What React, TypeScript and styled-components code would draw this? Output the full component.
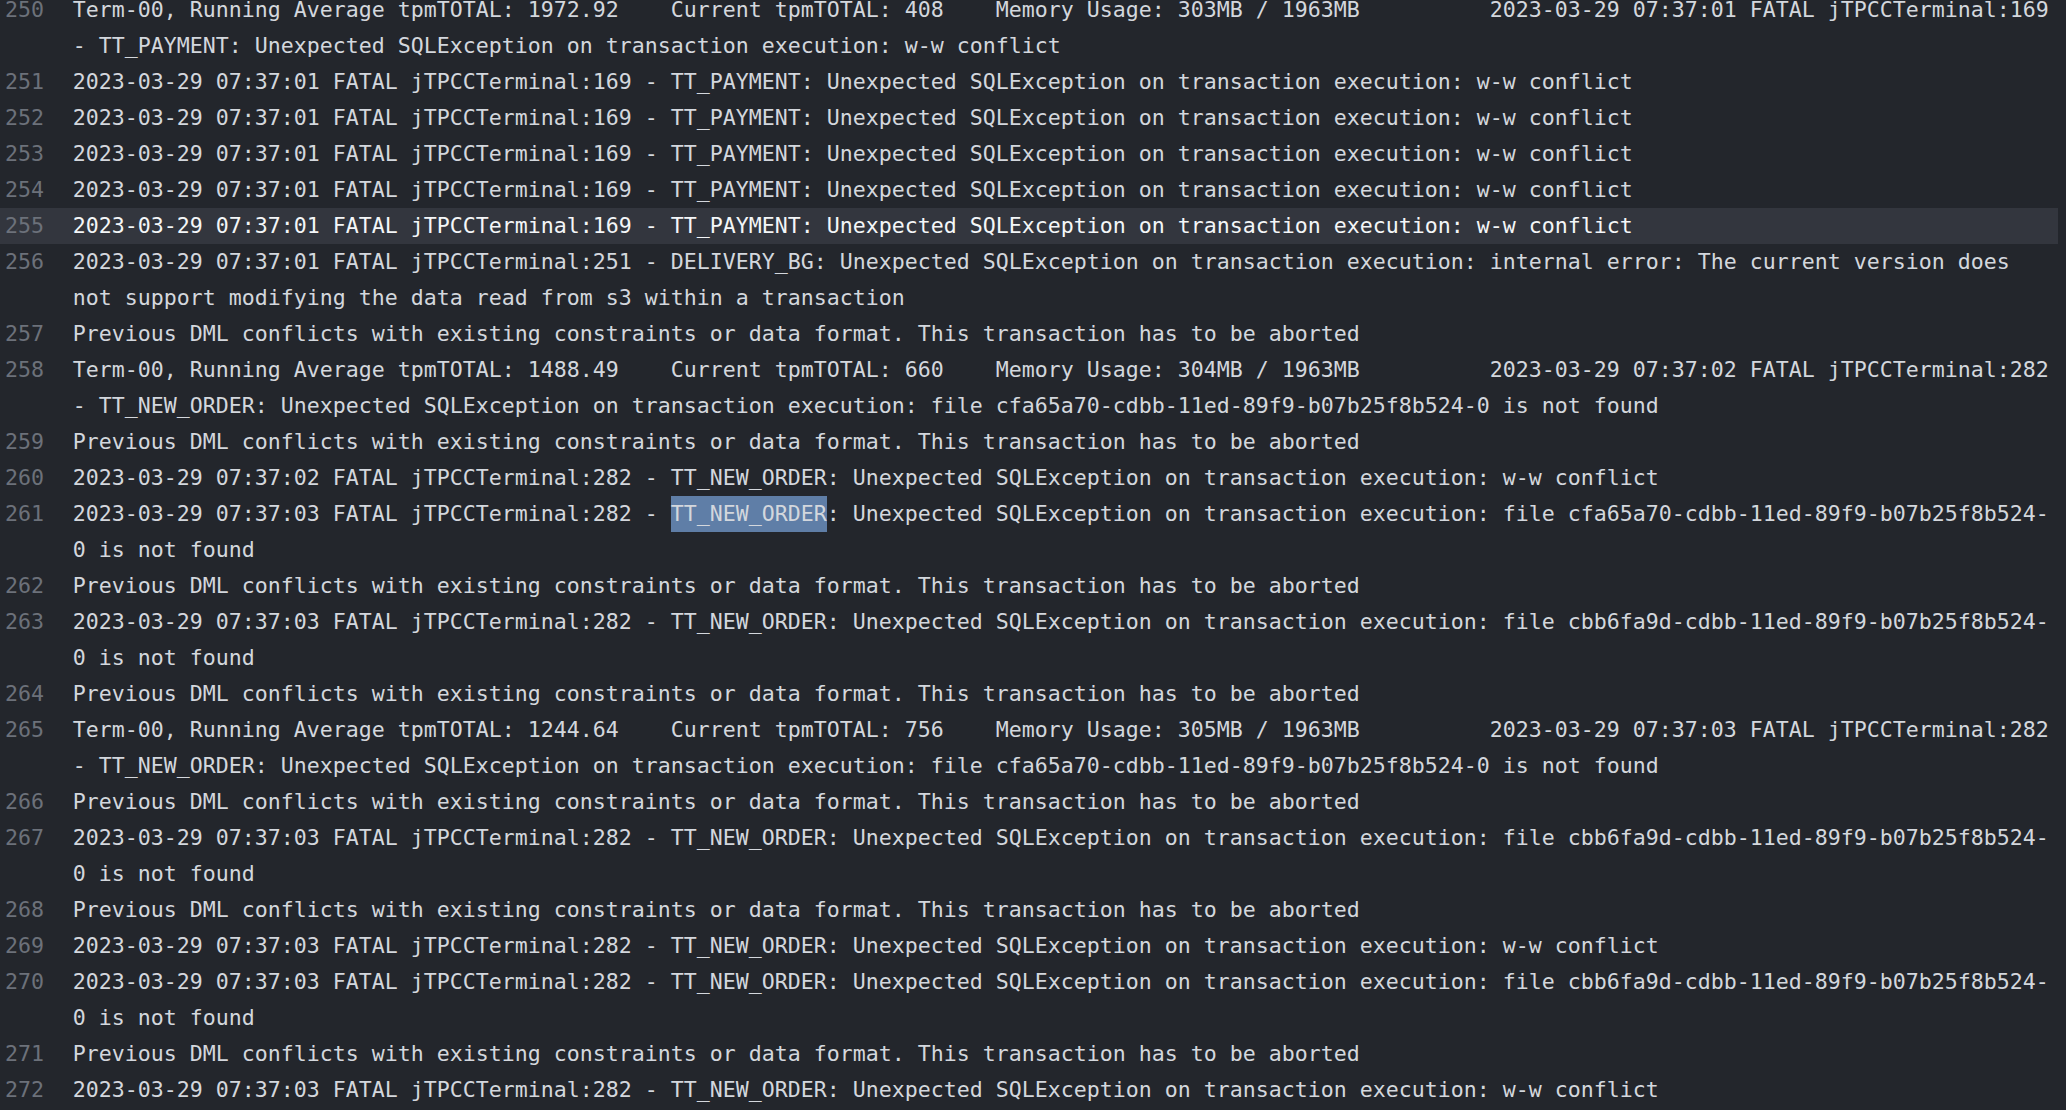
import React from 'react';
import styled, { createGlobalStyle, css } from 'styled-components';

interface LogLine {
  no: number;
  text: string;
  current?: boolean;
  selection?: string;
}

const ZW = '\u200B';
const TERM = 'jTPCCTerminal';
const PREV =
  'Previous DML conflicts with existing constraints or data format. This transaction has to be aborted';
const payment = (t: string) =>
  `2023-03-29 ${t} FATAL ${TERM}:169 - TT_PAYMENT: Unexpected SQLException on transaction execution: w-w conflict`;
const newOrder = (t: string, tail: string) =>
  `2023-03-29 ${t} FATAL ${TERM}:282 - TT_NEW_ORDER: Unexpected SQLException on transaction execution: ${tail}`;
const notFound = (id: string) => `file ${id}-b07b25f8b524-${ZW}0 is not found`;
const status = (avg: string, cur: string, mem: string) =>
  `Term-00, Running Average tpmTOTAL: ${avg}    Current tpmTOTAL: ${cur}    Memory Usage: ${mem} / 1963MB          `;

const lines: LogLine[] = [
  { no: 250, text: status('1972.92', '408', '303MB') + payment('07:37:01') },
  { no: 251, text: payment('07:37:01') },
  { no: 252, text: payment('07:37:01') },
  { no: 253, text: payment('07:37:01') },
  { no: 254, text: payment('07:37:01') },
  { no: 255, text: payment('07:37:01'), current: true },
  {
    no: 256,
    text: `2023-03-29 07:37:01 FATAL ${TERM}:251 - DELIVERY_BG: Unexpected SQLException on transaction execution: internal error: The current version does not support modifying the data read from s3 within a transaction`,
  },
  { no: 257, text: PREV },
  {
    no: 258,
    text:
      status('1488.49', '660', '304MB') +
      newOrder('07:37:02', notFound('cfa65a70-cdbb-11ed-89f9')),
  },
  { no: 259, text: PREV },
  { no: 260, text: newOrder('07:37:02', 'w-w conflict') },
  {
    no: 261,
    text: newOrder('07:37:03', notFound('cfa65a70-cdbb-11ed-89f9')),
    selection: 'TT_NEW_ORDER',
  },
  { no: 262, text: PREV },
  { no: 263, text: newOrder('07:37:03', notFound('cbb6fa9d-cdbb-11ed-89f9')) },
  { no: 264, text: PREV },
  {
    no: 265,
    text:
      status('1244.64', '756', '305MB') +
      newOrder('07:37:03', notFound('cfa65a70-cdbb-11ed-89f9')),
  },
  { no: 266, text: PREV },
  { no: 267, text: newOrder('07:37:03', notFound('cbb6fa9d-cdbb-11ed-89f9')) },
  { no: 268, text: PREV },
  { no: 269, text: newOrder('07:37:03', 'w-w conflict') },
  { no: 270, text: newOrder('07:37:03', notFound('cbb6fa9d-cdbb-11ed-89f9')) },
  { no: 271, text: PREV },
  { no: 272, text: newOrder('07:37:03', 'w-w conflict') },
];

const renderText = (line: LogLine) => {
  if (!line.selection) return line.text;
  const i = line.text.indexOf(line.selection);
  return (
    <>
      {line.text.slice(0, i)}
      <Selected>{line.selection}</Selected>
      {line.text.slice(i + line.selection.length)}
    </>
  );
};

export default function App() {
  return (
    <>
      <GlobalStyle />
      <Viewer>
        <LineList>
          {lines.map((line) => (
            <Row key={line.no} current={!!line.current}>
              <LineNo>{line.no}</LineNo>
              <LineText current={!!line.current}>{renderText(line)}</LineText>
            </Row>
          ))}
        </LineList>
      </Viewer>
    </>
  );
}

const GlobalStyle = createGlobalStyle`
  html, body {
    margin: 0;
    padding: 0;
    background: #23262c;
    overflow: hidden;
  }
`;

const Viewer = styled.div`
  width: 2066px;
  height: 1110px;
  overflow: hidden;
  background: #23262c;
  font-family: 'DejaVu Sans Mono', monospace;
  font-size: 21.6px;
  line-height: 36px;
`;

// the view is scrolled a few pixels into line 250
const LineList = styled.div`
  display: flex;
  flex-direction: column;
  margin-top: -8px;
  width: 2058px;
`;

const Row = styled.div<{ current: boolean }>`
  display: grid;
  grid-template-columns: 72.7px 1fr;
  ${({ current }) =>
    current &&
    css`
      background: #33363e;
    `}
`;

const LineNo = styled.div`
  padding-left: 5px;
  color: #6c717a;
  user-select: none;
`;

const LineText = styled.div<{ current: boolean }>`
  color: ${({ current }) => (current ? '#f4f6f8' : '#d3d7dd')};
  white-space: pre-wrap;
  overflow-wrap: normal;
`;

const Selected = styled.span`
  display: inline-block;
  vertical-align: top;
  line-height: 36px;
  background: #5f7ea7;
`;
